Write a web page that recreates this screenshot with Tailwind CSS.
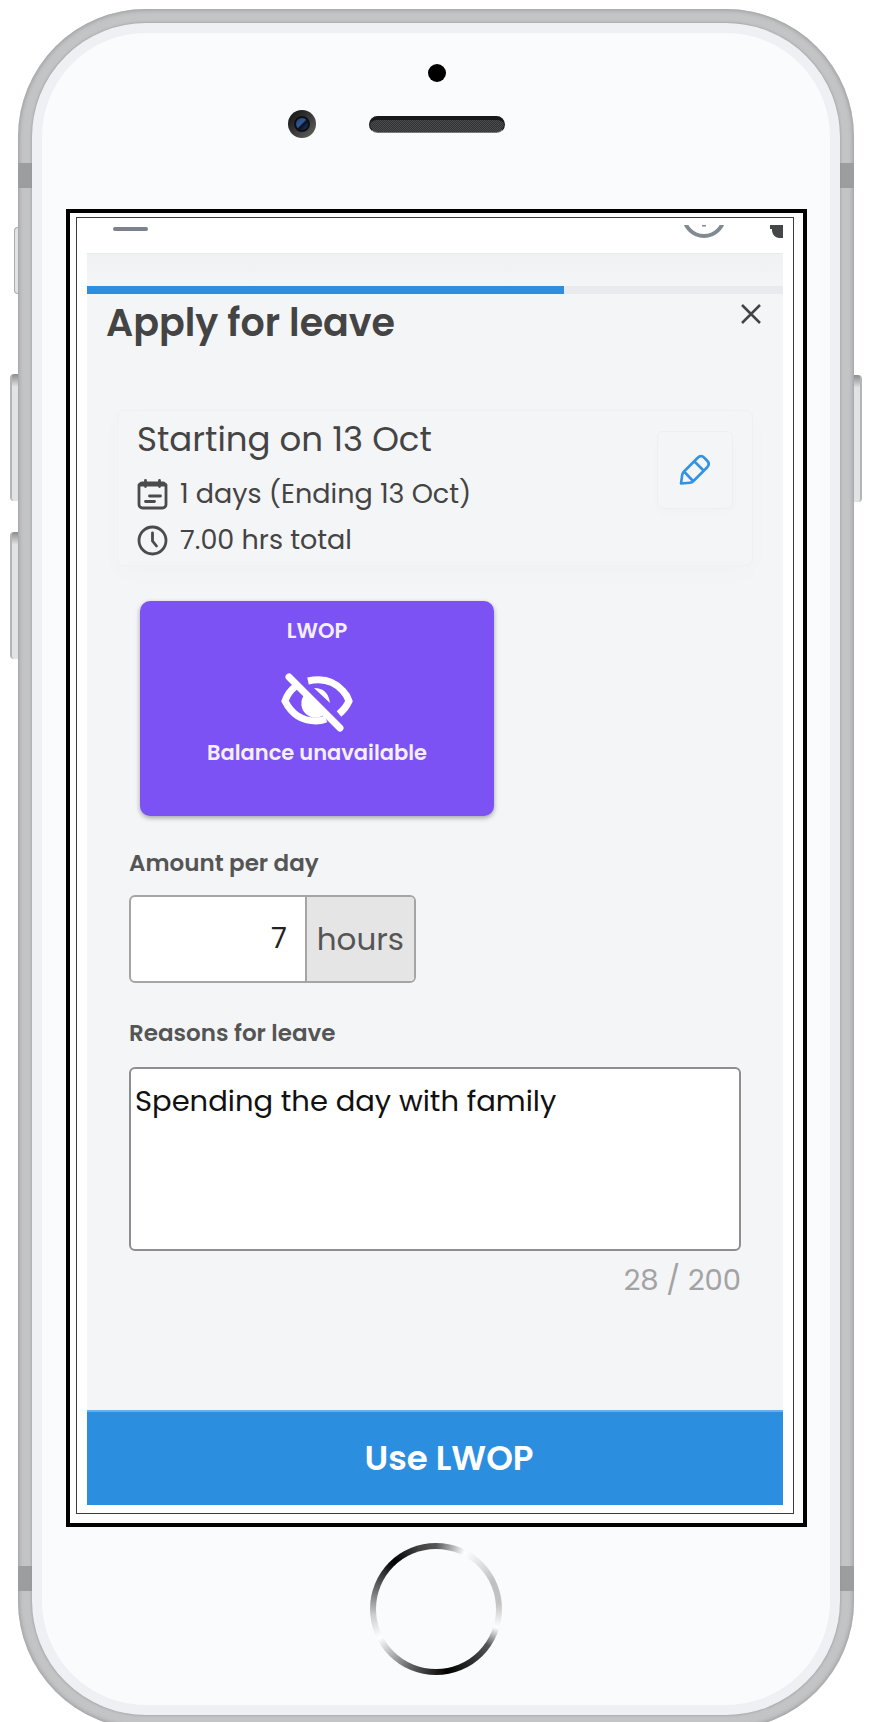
<!DOCTYPE html>
<html lang="en">
<head>
<meta charset="utf-8">
<meta name="viewport" content="width=device-width, initial-scale=1">
<title>Apply for leave</title>
<script src="https://cdn.jsdelivr.net/npm/@tailwindcss/browser@4"></script>
</head>
<body class="bg-white font-[Poppins,Inter,sans-serif] text-[#444]">
<div class="max-h-screen overflow-hidden pt-[9px] pr-4 pl-[18px]">
  <!-- Phone frame -->
  <div class="relative rounded-[128px] bg-[#c3c4c6] p-[14px] shadow-[inset_0_0_4px_1px_#9b9b9d]">
    <!-- Side buttons -->
    <div class="absolute -left-1 top-[218px] h-[67px] w-1 rounded-l-sm border border-r-0 border-[#aaa] bg-[#e2e3e5]"></div>
    <div class="absolute -left-2 top-[365px] h-[127px] w-2 rounded-l border-l-2 border-[#b4b5b6] bg-linear-to-b from-[#8b8c8d] via-[#e2e3e5] via-10% to-[#e2e3e5]"></div>
    <div class="absolute -left-2 top-[523px] h-[127px] w-2 rounded-l border-l-2 border-[#b4b5b6] bg-linear-to-b from-[#8b8c8d] via-[#e2e3e5] via-10% to-[#e2e3e5]"></div>
    <div class="absolute -right-2 top-[366px] h-[127px] w-2 rounded-r border-r-2 border-[#b4b5b6] bg-linear-to-b from-[#8b8c8d] via-[#e2e3e5] via-10% to-[#e2e3e5]"></div>
    <!-- Antenna bands -->
    <div class="absolute inset-x-0 top-[154px] h-[25px] bg-[#9c9d9f]"></div>
    <div class="absolute inset-x-0 bottom-[138px] h-[25px] bg-[#9c9d9f]"></div>

    <div class="relative flex flex-col rounded-[114px] border-[10px] border-[#eff0f3] bg-[#fafbfd] px-6 pb-[30px] shadow-[0_0_3px_#8f9092]">
      <!-- Sensor, camera and speaker -->
      <div class="-mr-[2px] flex h-[176px] flex-col items-center">
        <div class="mt-[31px] size-[18px] rounded-full bg-black"></div>
        <div class="mt-7 grid w-full grid-cols-[1fr_136px_1fr] items-center">
          <div class="mr-[53px] grid size-7 place-items-center justify-self-end rounded-full bg-linear-to-br from-[#111] to-[#666]">
            <div class="size-4 rounded-full border-2 border-[#101010] bg-[linear-gradient(135deg,#2a3f68_0%,#3159a0_45%,#091020_55%,#24406f_100%)]"></div>
          </div>
          <div class="h-[17px] rounded-full border border-t-4 border-[#17181a] border-b-[#777] bg-[repeating-conic-gradient(#303234_0_25%,#4a4c4e_0_50%)] bg-size-[2px_2px]"></div>
        </div>
      </div>

      <!-- Screen -->
      <main class="-mr-[1px] border-4 border-black bg-[#fdfdfd] pt-1 pr-[9px] pb-[9px] pl-[6px]">
        <div class="border border-[#3b3b3b] bg-white px-[10px] pt-[7px] pb-2">
          <header class="relative h-[29px] overflow-hidden border-b border-[#e6eced]">
            <button type="button" aria-label="Menu" class="absolute left-[26px] top-[2px] h-1 w-[35px] rounded-full bg-[#7b828d]"></button>
            <button type="button" aria-label="Help" class="absolute right-[57px] -top-[31px] size-11">
              <svg viewBox="0 0 44 44" fill="none" stroke="#818992" stroke-width="4"><circle cx="22" cy="22" r="20"/><path d="M20 31h4" stroke-width="3"/></svg>
            </button>
            <svg class="absolute right-0 top-0 h-[14px] w-[13px]" viewBox="0 0 13 14" fill="#444649" aria-hidden="true"><path d="M0 0H13V13H9Q3 12 2 6V4H0z"/></svg>
          </header>

          <div class="bg-[#f4f5f7]">
            <div class="h-8 bg-linear-to-b from-[#eff1f3] to-[#f4f5f7]"></div>
            <div role="progressbar" aria-label="Application progress" aria-valuenow="69" aria-valuemin="0" aria-valuemax="100" class="h-2 bg-[#e8eaed]">
              <div class="h-full bg-[#2c8edf]" style="width:68.6%"></div>
            </div>
            <div class="flex items-start justify-between pr-[22px] pl-[19px]">
              <h1 class="pt-1 text-[38px] leading-[50px] font-semibold">Apply for leave</h1>
              <button type="button" aria-label="Close" class="mt-2.5">
                <svg class="size-5" viewBox="0 0 20 20" fill="none" stroke="#444" stroke-width="2.500"><path d="M1 1l18 18M19 1L1 19"/></svg>
              </button>
            </div>

            <!-- Leave summary -->
            <section class="mx-[30px] mt-[62px] flex justify-between rounded-md border border-[#eff0f2] pr-[19px] pl-[19px] shadow-[0_8px_30px_#00000004]">
              <div class="pb-[2px]">
                <h2 class="pt-[6px] text-[34px] leading-[44px]">Starting on 13 Oct</h2>
                <p class="mt-2.5 flex items-center gap-3 text-[27px] leading-[46px]">
                  <svg class="size-[31px]" viewBox="0 0 31 31" fill="none" stroke="#4b4b4d" stroke-width="2.800" stroke-linecap="round" aria-hidden="true"><rect x="2" y="4" width="27" height="25" rx="3.500"/><path d="M2 6h27M8.500 1.500v6M22.500 1.500v6M12.500 17h11M8.500 22.500h9"/></svg>
                  1 days (Ending 13 Oct)
                </p>
                <p class="flex items-center gap-3 text-[27px] leading-[46px]">
                  <svg class="size-[31px]" viewBox="0 0 31 31" fill="none" stroke="#4b4b4d" stroke-width="2.800" stroke-linecap="round" aria-hidden="true"><circle cx="15.500" cy="15.500" r="13.500"/><path d="M15.500 8v8l4 5"/></svg>
                  7.00 hrs total
                </p>
              </div>
              <button type="button" aria-label="Edit dates" class="mt-5 grid h-[78px] w-[76px] place-items-center rounded-md border border-[#eeeff1] shadow-[0_6px_16px_#00000003]">
                <svg class="size-8" viewBox="0 0 32 32" fill="none" stroke="#3492e2" stroke-width="2.600" stroke-linejoin="round" aria-hidden="true"><path d="M2 29.500L3.200 21Q3.500 19 5 17.500L18.500 4Q22 0.500 25.500 4L28 6.500Q31.500 10 28 13.500L14.500 27Q13 28.500 11 28.700zM15.500 7.500l9 9M5.500 18l8.500 9"/></svg>
              </button>
            </section>

            <form class="px-[42px] pt-[35px]">
              <button type="button" class="ml-[11px] flex h-[215px] w-[354px] flex-col items-center rounded-[10px] bg-[#7d52f4] text-[21px] leading-6 font-semibold text-[#f3efff] shadow-[0_2px_5px_#00000055]">
                <span class="mt-[18px]">LWOP</span>
                <svg class="mt-7 h-[64px] w-[72px]" viewBox="0 0 72 64" fill="none" stroke="#fff" stroke-width="7" aria-hidden="true">
                  <path d="M15 15Q7 21 4 30Q14 50 35 50Q40 50 45 48M27 10Q49 5 62 20Q66 24 68 30Q65 37 58 43"/>
                  <path d="M24 23L45 42A13.500 13.500 0 0 1 24 23zM33 17Q47 17 49 32z" fill="#fff" stroke="none"/>
                  <path d="M8 6L59 57" stroke-linecap="round"/>
                </svg>
                <span class="mt-1.5">Balance unavailable</span>
              </button>

              <label for="amount" class="mt-8 block text-[23px] leading-[30px] font-semibold text-[#555]">Amount per day</label>
              <div class="mt-[17px] flex h-[88px] w-[287px] overflow-hidden rounded-md border-2 border-[#a5a5a5] bg-white">
                <input id="amount" type="text" inputmode="numeric" value="7" class="min-w-0 flex-1 pr-[18px] text-right text-[29px] text-[#222] outline-none">
                <span class="flex items-center border-l-2 border-[#a5a5a5] bg-[#e5e5e5] px-2.5 text-[31px] text-[#555]">hours</span>
              </div>

              <label for="reason" class="mt-[35px] block text-[23px] leading-[30px] font-semibold text-[#555]">Reasons for leave</label>
              <textarea id="reason" maxlength="200" class="mt-[19px] block h-[184px] w-full resize-none rounded-md border-2 border-[#8e8e90] bg-white px-1 py-3 text-[29px] leading-10 text-[#111] outline-none">Spending the day with family</textarea>
              <p class="mt-[9px] text-right text-[29px] leading-10 text-[#a3a3a3]">28 / 200</p>
              <button type="submit" class="-mx-[42px] mt-[110px] block h-[95px] w-[calc(100%+84px)] border-t-2 border-[#69aee6] bg-[#2c8edf] pl-7 text-[34px] font-semibold text-white">Use LWOP</button>
            </form>
          </div>
        </div>
      </main>

      <!-- Home button -->
      <button type="button" aria-label="Home" class="mt-4 grid size-[132px] place-items-center self-center rounded-full bg-[conic-gradient(#555_0deg,#fff_27deg,#bfbfbf_65deg,#c4c4c4_85deg,#fff_107deg,#555_125deg,#000_170deg,#666_205deg,#fff_243deg,#ccc_265deg,#777_285deg,#000_318deg,#444_345deg,#555_360deg)]">
        <span class="size-[120px] rounded-full bg-[#fafbfd]"></span>
      </button>
    </div>
  </div>
</div>
</body>
</html>
